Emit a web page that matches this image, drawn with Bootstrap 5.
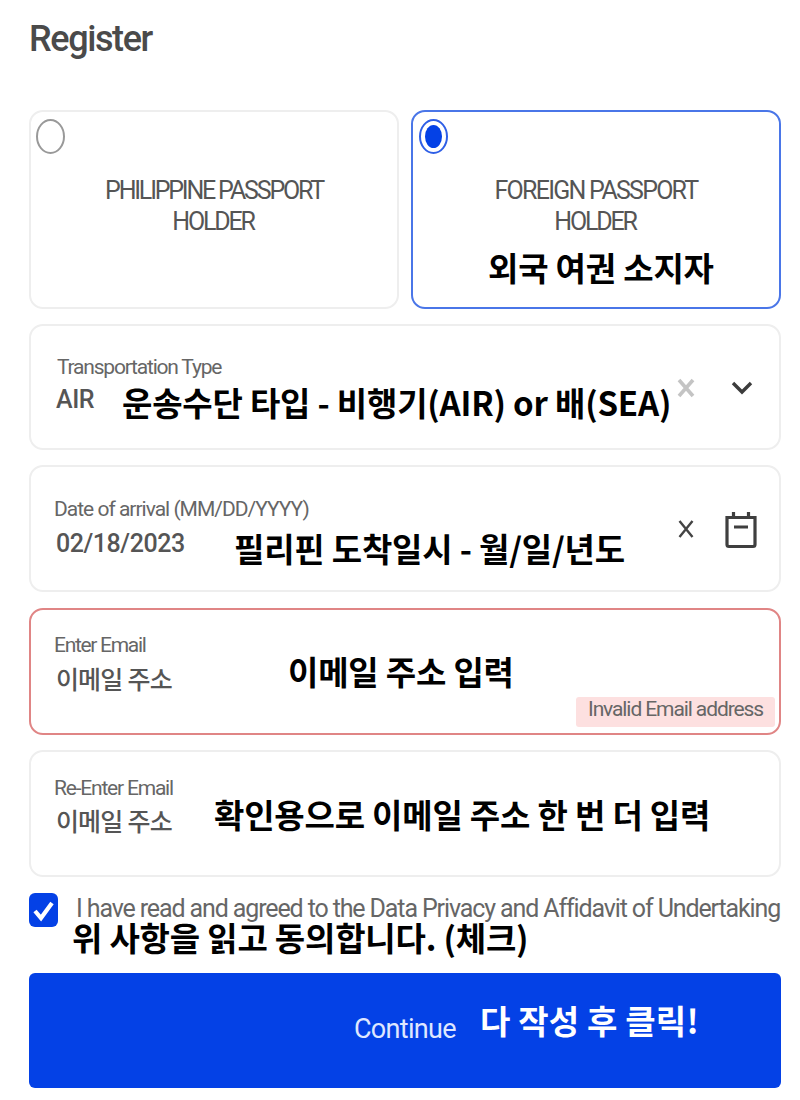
<!doctype html>
<html lang="en"><head><meta charset="utf-8"><title>Register</title>
<link href="https://cdn.jsdelivr.net/npm/bootstrap@5.3.0/dist/css/bootstrap.min.css" rel="stylesheet">
<style>
html,body{background:#fff;}
body{font-family:Roboto,"Noto Sans CJK KR",sans-serif;color:#555;width:800px;height:1100px;overflow:hidden;}
.shell{padding:18px 19px 0 29px;}
.page-title{font-size:36px;line-height:42px;font-weight:500;color:#4a4a4a;letter-spacing:-1.4px;margin:0 0 50px 0;}
.pick-row{display:grid;grid-template-columns:370px 370px;gap:12px;margin-bottom:15px;}
.pick{height:199px;border:2px solid #eeeeee;border-radius:14px;position:relative;text-align:center;padding-top:63px;font-size:25px;line-height:31px;color:#555;}
.pick.on{border-color:#4a76e8;}
.ph{letter-spacing:-2.2px;}
.fp{letter-spacing:-1.75px;}
.hd{letter-spacing:-2.2px;margin-left:-2px;}
.dot{position:absolute;left:5px;top:7px;width:29px;height:35px;border-radius:50%;border:2px solid #999;}
.on .dot{left:6px;border-color:#2f5fe6;}
.on .dot::after{content:"";position:absolute;inset:4px;background:#0441e6;border-radius:50%;}
.field{height:127px;border:2px solid #eeeeee;border-radius:14px;position:relative;margin-bottom:15px;padding:27px 0 0 23px;}
.field.first{height:126px;}
.field.second{margin-bottom:16px;padding-top:28px;}
.field.bad{border-color:#e08585;}
.lab{font-size:21px;line-height:28px;letter-spacing:-1px;color:#666;}
.lab.up{margin-top:-6px;margin-bottom:6px;letter-spacing:-1.3px;}
.lab.up2{margin-top:-5px;margin-bottom:5px;letter-spacing:-1.2px;}
.lab.tr{margin-left:3px;letter-spacing:-1.2px;}
.val{font-size:25px;line-height:32px;letter-spacing:-.45px;color:#555;margin-top:3px;margin-left:2px;font-weight:500;}
.val.dt{margin-top:5px;}
.val.ko{letter-spacing:-.9px;margin-top:5px;}
.note{position:absolute;font-family:"Noto Sans CJK KR",sans-serif;font-weight:700;font-size:33px;line-height:34px;color:#000;white-space:nowrap;letter-spacing:-.2px;}
.note.wide{letter-spacing:.2px;}
.err{position:absolute;right:4px;bottom:6px;height:30px;width:199px;background:#fde0e0;border-radius:3px;font-size:21px;line-height:24px;letter-spacing:-1.1px;color:#666;text-align:center;}
.ico{position:absolute;}
.agree{display:flex;align-items:flex-start;gap:18px;height:26px;margin-top:16px;}
.tick{width:29px;height:34px;background:#0441e6;border-radius:6px;flex:none;display:flex;align-items:center;justify-content:center;}
.agree-text{font-size:25px;line-height:26px;letter-spacing:-1.12px;color:#666;white-space:nowrap;margin-top:3px;}
.agree-note{position:relative;height:54px;}
.go{display:block;width:752px;height:115px;background:#0441e6;border:0;border-radius:6px;color:#dfe7ff;font-size:27px;position:relative;padding:0;letter-spacing:-.7px;}
.go .label{position:absolute;left:325px;top:39px;line-height:34px;}
</style></head><body>
<div class="shell">
<h1 class="page-title">Register</h1>
<div class="pick-row">
 <div class="pick"><span class="dot"></span><span class="ph">PHILIPPINE PASSPORT</span><br><span class="hd">HOLDER</span></div>
 <div class="pick on"><span class="dot"></span><span class="fp">FOREIGN PASSPORT</span><br><span class="hd">HOLDER</span><span class="note" style="left:75px;top:138px">외국 여권 소지자</span></div>
</div>
<div class="field first"><div class="lab tr">Transportation Type</div><div class="val">AIR</div>
 <span class="note" style="left:91px;top:59px">운송수단 타입 - 비행기(AIR) or 배(SEA)</span>
 <svg class="ico" style="left:646px;top:51px" width="18" height="22" viewBox="0 0 18 22"><path d="M2 3l14 16M16 3L2 19" stroke="#c4c4c4" stroke-width="3.6" fill="none"/></svg>
 <svg class="ico" style="left:700px;top:54px" width="22" height="16" viewBox="0 0 22 16"><path d="M2 3l9 9 9-9" stroke="#3c3c3c" stroke-width="3.4" fill="none"/></svg>
</div>
<div class="field second"><div class="lab">Date of arrival (MM/DD/YYYY)</div><div class="val dt">02/18/2023</div>
 <span class="note" style="left:203px;top:64px">필리핀 도착일시 - 월/일/년도</span>
 <svg class="ico" style="left:647px;top:52px" width="16" height="20" viewBox="0 0 16 20"><path d="M1.500 2l13 16M14.500 2l-13 16" stroke="#444" stroke-width="2.400" fill="none"/></svg>
 <svg class="ico" style="left:693px;top:42px" width="34" height="40" viewBox="0 0 34 40"><path d="M3 8.500h28v27a2 2 0 0 1-2 2H5a2 2 0 0 1-2-2zM9.500 3v6M24.500 3v6M10 18h14" stroke="#3f3f3f" stroke-width="3.200" fill="none"/></svg>
</div>
<div class="field bad"><div class="lab up">Enter Email</div><div class="val ko">이메일 주소</div>
 <span class="note" style="left:257px;top:44px">이메일 주소 입력</span>
 <div class="err">Invalid Email address</div>
</div>
<div class="field"><div class="lab up2">Re-Enter Email</div><div class="val ko">이메일 주소</div>
 <span class="note" style="left:183px;top:45px">확인용으로 이메일 주소 한 번 더 입력</span>
</div>
<div class="agree"><span class="tick"><svg width="23" height="23" viewBox="0 0 23 23"><path d="M3 12l6 7L20 4" stroke="#fff" stroke-width="4.200" fill="none"/></svg></span><span class="agree-text">I have read and agreed to the Data Privacy and Affidavit of Undertaking</span></div>
<div class="agree-note"><span class="note" style="left:43px;top:1px">위 사항을 읽고 동의합니다. (체크)</span></div>
<button class="go" type="button"><span class="label">Continue</span><span class="note wide" style="left:451px;top:30px;color:#fff">다 작성 후 클릭!</span></button>
</div>
</body></html>
